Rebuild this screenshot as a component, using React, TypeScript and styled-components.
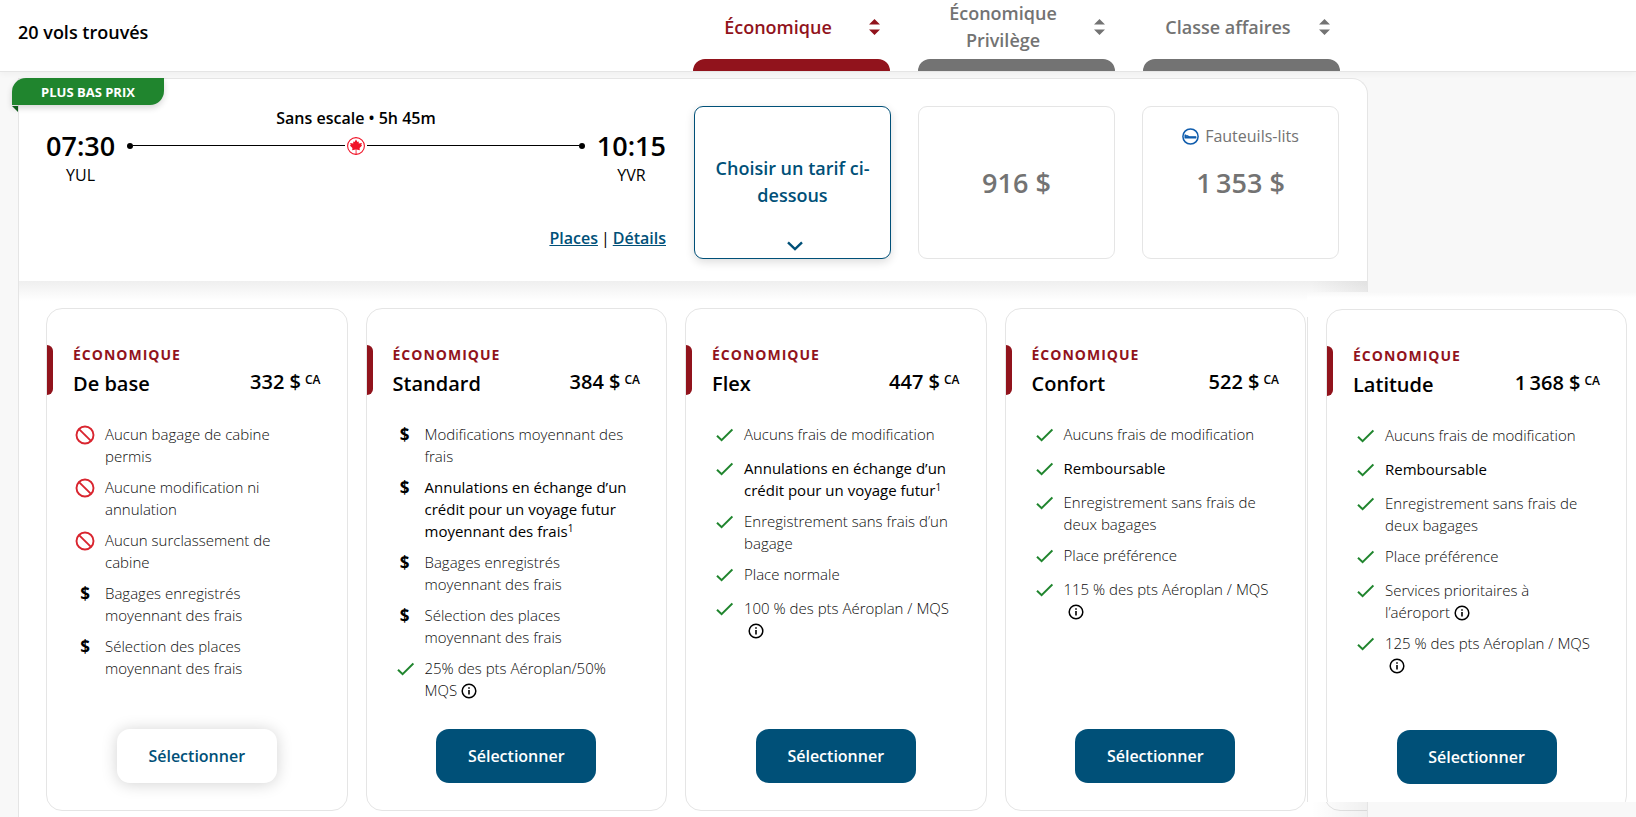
import React from "react";
import styled, { createGlobalStyle, css } from "styled-components";

const color = {
  ink: "#000000",
  body: "#0c0c0c",
  muted: "#737373",
  line: "#e5e5e5",
  page: "#f8f8f8",
  red: "#91131c",
  blue: "#005078",
  green: "#20852e",
};

const GlobalStyle = createGlobalStyle`
  *, *::before, *::after { box-sizing: border-box; }
  body {
    margin: 0;
    background: ${color.page};
    color: ${color.ink};
    font-family: "Open Sans", "Noto Sans", sans-serif;
    font-size: 16px;
    line-height: 24px;
    overflow-x: hidden;
  }
  button { font: inherit; cursor: pointer; }
  h1, h2, h3, p, ul { margin: 0; padding: 0; }
  ul { list-style: none; }
`;

const Page = styled.div`
  display: flex;
  flex-direction: column;
  min-height: 100vh;
  overflow: hidden;
`;

/* ---------- Results header ---------- */

const ResultsHeader = styled.header`
  background: #fff;
  border-bottom: 1px solid ${color.line};
  box-shadow: 0 2px 6px rgba(0, 0, 0, 0.04);
`;

const HeaderInner = styled.div`
  display: flex;
  justify-content: space-between;
  max-width: 1368px;
  height: 71px;
  padding: 0 28px 0 18px;
`;

const ResultCount = styled.h1`
  font-size: 18px;
  font-weight: 600;
  line-height: 27px;
  padding-top: 19px;
`;

const CabinTabs = styled.div`
  display: flex;
  gap: 28px;
`;

const CabinTab = styled.button<{ $active?: boolean }>`
  display: flex;
  flex-direction: column;
  width: 197px;
  padding: 0;
  border: 0;
  background: none;
  color: ${(p) => (p.$active ? color.red : color.muted)};
  font-size: 18px;
  font-weight: 600;
  line-height: 27px;

  &::after {
    content: "";
    align-self: stretch;
    height: 12px;
    border-radius: 12px 12px 0 0;
    background: currentColor;
  }
`;

const CabinTabLabel = styled.span`
  flex: 1;
  align-self: stretch;
  display: flex;
  align-items: center;
  gap: 6px;
  padding: 0 10px 5px 0;

  span {
    flex: 1;
    padding: 0 12px;
  }
`;

/* ---------- Flight panel ---------- */

const Panel = styled.main`
  position: relative;
  flex: 1;
  max-width: 1350px;
  width: calc(100% - 36px);
  margin: 6px 0 0 18px;
  background: #fff;
  border: 1px solid ${color.line};
  border-bottom: 0;
  border-radius: 0 16px 0 0;
`;

const Ribbon = styled.div`
  position: absolute;
  top: -1px;
  left: -7px;
  width: 152px;
  height: 27px;
  border-radius: 14px 0 14px 0;
  background: ${color.green};
  box-shadow: 0 3px 6px rgba(0, 0, 0, 0.16);
  color: #fff;
  font-size: 13px;
  font-weight: 700;
  line-height: 28px;
  text-align: center;

  &::after {
    content: "";
    position: absolute;
    top: 28px;
    left: 0;
    border-top: 6px solid #0f5c1b;
    border-left: 6px solid transparent;
  }
`;

const FlightRow = styled.section`
  display: flex;
  gap: 28px;
  padding: 27px 28px 22px 27px;
`;

const FlightInfo = styled.div`
  flex: 1;
  display: flex;
  flex-direction: column;
  justify-content: space-between;
  padding-bottom: 9px;
`;

const Itinerary = styled.div`
  display: flex;
  gap: 12px;
`;

const Stop = styled.div`
  padding-top: 22px;
  text-align: center;

  time {
    display: block;
    font-size: 27px;
    font-weight: 600;
    line-height: 35px;
  }
`;

const Route = styled.div`
  flex: 1;
  font-weight: 600;
  text-align: center;
`;

const RouteLine = styled.div`
  display: flex;
  align-items: center;
  height: 31px;
`;

const Dot = styled.i`
  width: 6px;
  height: 6px;
  border-radius: 50%;
  background: ${color.ink};
`;

const Rule = styled.i`
  flex: 1;
  height: 1px;
  background: ${color.ink};
`;

const FlightLinks = styled.nav`
  display: flex;
  justify-content: flex-end;
  gap: 3px;
  font-weight: 600;

  a {
    color: ${color.blue};
  }

  span {
    font-weight: 400;
  }
`;

const CabinPrices = styled.div`
  display: flex;
  gap: 27px;
`;

const CabinBox = styled.button<{ $open?: boolean }>`
  display: grid;
  grid-template-rows: 41px 1fr 41px;
  justify-items: center;
  align-items: center;
  width: 197px;
  height: 153px;
  padding: 0 16px;
  border: 1px solid ${color.line};
  border-radius: 9px;
  background: #fff;
  color: ${color.muted};
  font-size: 27px;
  font-weight: 600;
  line-height: 36px;

  ${(p) =>
    p.$open &&
    css`
      grid-template-rows: 41px 1fr 43px;
      border-color: ${color.blue};
      box-shadow: 0 3px 10px rgba(0, 0, 0, 0.14);
      color: ${color.blue};
      font-size: 18px;
      line-height: 27px;
    `}
`;

const CabinNote = styled.span`
  grid-row: 1;
  align-self: end;
  display: flex;
  align-items: center;
  gap: 6px;
  font-size: 16px;
  font-weight: 400;
  line-height: 24px;
`;

const CabinValue = styled.span`
  grid-row: 2;
`;

const CabinToggle = styled.span`
  grid-row: 3;
  align-self: end;
  display: flex;
  align-items: center;
  height: 24px;
  padding-left: 4px;
`;

/* ---------- Fares ---------- */

const Fares = styled.section`
  position: relative;
  background: linear-gradient(#efefef, #fff 20px);
`;

const FareTrack = styled.div`
  display: flex;
  gap: 18px;
  padding: 27px 0 6px 27px;
  overflow: hidden;

  &::after {
    content: "";
    position: absolute;
    top: 0;
    right: 0;
    bottom: 0;
    width: 56px;
    background: linear-gradient(to right, rgba(0, 0, 0, 0), rgba(0, 0, 0, 0.06));
  }
`;

const FareCard = styled.article`
  flex: 0 0 calc((100% - 115px) / 4);
  display: flex;
  flex-direction: column;
  min-height: 503px;
  padding: 36px 26px 27px;
  border: 1px solid ${color.line};
  border-radius: 16px;
  background: #fff;
`;

const FareHead = styled.header`
  position: relative;

  &::before {
    content: "";
    position: absolute;
    top: 0;
    left: -26px;
    width: 6px;
    height: 50px;
    border-radius: 0 6px 6px 0;
    background: ${color.red};
  }
`;

const FareCabin = styled.p`
  color: ${color.red};
  font-size: 14px;
  font-weight: 700;
  letter-spacing: 1px;
  line-height: 20px;
`;

const FareTitle = styled.div`
  display: flex;
  justify-content: space-between;
  align-items: flex-start;
  padding-top: 3px;
  font-size: 20px;
  font-weight: 600;
  line-height: 28px;

  h2 {
    font-size: 20px;
    font-weight: 600;
    line-height: 32px;
  }
`;

const FarePrice = styled.p`
  display: flex;
  gap: 4px;

  small {
    font-size: 12px;
    font-weight: 600;
    line-height: 24px;
  }
`;

const Features = styled.ul`
  flex: 1;
  display: flex;
  flex-direction: column;
  gap: 9px;
  padding: 23px 2px 23px 0;
`;

const FeatureItem = styled.li<{ $strong?: boolean }>`
  display: flex;
  gap: 8px;
  min-height: 25px;
  color: ${(p) => (p.$strong ? color.ink : color.body)};
  font-size: 15px;
  font-weight: ${(p) => (p.$strong ? 400 : 300)};
  line-height: 22px;

  sup {
    font-size: 10px;
    line-height: 0;
    vertical-align: 5px;
  }
`;

const FeatureIcon = styled.span`
  flex: 0 0 24px;
  display: flex;
  justify-content: center;
  align-items: center;
  height: 24px;
  color: ${color.ink};
  font-size: 17px;
  font-weight: 700;
`;

const InfoButton = styled.button`
  display: inline-block;
  width: 16px;
  height: 16px;
  margin-left: 4px;
  padding: 0;
  border: 0;
  background: none;
  vertical-align: -3px;

  svg { display: block; }
`;

const SelectButton = styled.button<{ $light?: boolean }>`
  align-self: center;
  width: 160px;
  height: 54px;
  border: 0;
  border-radius: 13px;
  background: ${(p) => (p.$light ? "#fff" : color.blue)};
  box-shadow: ${(p) => (p.$light ? "0 1px 16px rgba(0, 0, 0, 0.18)" : "none")};
  color: ${(p) => (p.$light ? color.blue : "#fff")};
  font-weight: 600;
`;

/* The last fare slides over the edge of the panel. */
const FareSlide = styled.div`
  position: absolute;
  top: 11px;
  left: calc(100% - 60px);
  width: 330px;
  height: 510px;
  padding: 17px 10px 0 19px;
  overflow: hidden;
  background: linear-gradient(#f8f8f8, #fff 6px);

  &::before {
    content: "";
    position: absolute;
    top: 25px;
    bottom: 0;
    left: 0;
    border-left: 1px solid ${color.line};
  }
`;

/* ---------- Icons ---------- */

const SortIcon = () => (
  <svg width="11" height="16" viewBox="0 0 11 16" fill="currentColor" aria-hidden="true">
    <path d="M5.5 0 11 5.5H0zM5.5 16 0 10.5h11z" />
  </svg>
);

const CheckIcon = () => (
  <svg width="18" height="14" viewBox="0 0 18 14" fill="none" stroke="#20852e" strokeWidth="2" aria-hidden="true">
    <path d="M2 7.7 6.6 12.2 17.4 1.4" />
  </svg>
);

const BanIcon = () => (
  <svg width="20" height="20" viewBox="0 0 20 20" fill="none" stroke="#d9252f" strokeWidth="1.9" aria-hidden="true">
    <circle cx="10" cy="10" r="8.5" />
    <path d="M3.8 3.8 16.2 16.2" />
  </svg>
);

const InfoIcon = () => (
  <svg width="16" height="16" viewBox="0 0 16 16" fill="none" stroke="#000" aria-hidden="true">
    <circle cx="8" cy="8" r="6.8" strokeWidth="1.5" />
    <path d="M8 7v4.5M8 4.3v1.5" strokeWidth="1.6" />
  </svg>
);

const ChevronIcon = () => (
  <svg width="16" height="10" viewBox="0 0 16 10" fill="none" stroke="currentColor" strokeWidth="2.4" aria-hidden="true">
    <path d="M1 1.3 8 8l7-6.7" />
  </svg>
);

const BedIcon = () => (
  <svg width="17" height="17" viewBox="0 0 17 17" fill="none" stroke="#0f5cac" aria-hidden="true">
    <circle cx="8.5" cy="8.5" r="7.6" strokeWidth="1.5" />
    <path d="M3.3 6.5v3.2h11" strokeWidth="1.7" />
    <path d="M3.4 8.3 5 7.9l2.3 1h6.900" strokeWidth="1.5" />
  </svg>
);

const Logo = styled.svg`
  margin: 0 2px;
`;

const LeafLogo = () => (
  <Logo width="18" height="18" viewBox="0 0 18 18" aria-hidden="true">
    <circle cx="9" cy="9" r="8.4" fill="none" stroke="#f01428" strokeWidth="1.1" />
    <path
      fill="#f01428"
      d="M9 2.4 10.5 5l1.3-.6-.1 2.200 3.200-.500-.700 1.800.900.700-2.500 2.400.200 2.300-3.400-.700.200 4.800h-1l.100-4.800-3.500.700.200-2.300-2.500-2.400.900-.700-.700-1.800 3.200.500-.100-2.200 1.300.600z"
    />
  </Logo>
);

/* ---------- Data ---------- */

type Kind = "no" | "fee" | "yes";
type Feature = { kind: Kind; text: string; strong?: boolean; note?: string; info?: boolean };
type Fare = { name: string; price: string; features: Feature[]; light?: boolean };

const fares: Fare[] = [
  {
    name: "De base",
    price: "332 $",
    light: true,
    features: [
      { kind: "no", text: "Aucun bagage de cabine permis" },
      { kind: "no", text: "Aucune modification ni annulation" },
      { kind: "no", text: "Aucun surclassement de cabine" },
      { kind: "fee", text: "Bagages enregistrés moyennant des frais" },
      { kind: "fee", text: "Sélection des places moyennant des frais" },
    ],
  },
  {
    name: "Standard",
    price: "384 $",
    features: [
      { kind: "fee", text: "Modifications moyennant des frais" },
      {
        kind: "fee",
        text: "Annulations en échange d’un crédit pour un voyage futur moyennant des frais",
        strong: true,
        note: "1",
      },
      { kind: "fee", text: "Bagages enregistrés moyennant des frais" },
      { kind: "fee", text: "Sélection des places moyennant des frais" },
      { kind: "yes", text: "25% des pts Aéroplan/50% MQS", info: true },
    ],
  },
  {
    name: "Flex",
    price: "447 $",
    features: [
      { kind: "yes", text: "Aucuns frais de modification" },
      { kind: "yes", text: "Annulations en échange d’un crédit pour un voyage futur", strong: true, note: "1" },
      { kind: "yes", text: "Enregistrement sans frais d’un bagage" },
      { kind: "yes", text: "Place normale" },
      { kind: "yes", text: "100 % des pts Aéroplan / MQS", info: true },
    ],
  },
  {
    name: "Confort",
    price: "522 $",
    features: [
      { kind: "yes", text: "Aucuns frais de modification" },
      { kind: "yes", text: "Remboursable", strong: true },
      { kind: "yes", text: "Enregistrement sans frais de deux bagages" },
      { kind: "yes", text: "Place préférence" },
      { kind: "yes", text: "115 % des pts Aéroplan / MQS", info: true },
    ],
  },
];

const latitude: Fare = {
  name: "Latitude",
  price: "1\u2009368 $",
  features: [
    { kind: "yes", text: "Aucuns frais de modification" },
    { kind: "yes", text: "Remboursable", strong: true },
    { kind: "yes", text: "Enregistrement sans frais de deux bagages" },
    { kind: "yes", text: "Place préférence" },
    { kind: "yes", text: "Services prioritaires à l’aéroport", info: true },
    { kind: "yes", text: "125 % des pts Aéroplan / MQS", info: true },
  ],
};

const cabins = ["Économique", "Économique Privilège", "Classe affaires"];

const kindIcon: Record<Kind, React.ReactNode> = {
  no: <BanIcon />,
  fee: "$",
  yes: <CheckIcon />,
};

const FareOption = ({ fare }: { fare: Fare }) => (
  <FareCard>
    <FareHead>
      <FareCabin>ÉCONOMIQUE</FareCabin>
      <FareTitle>
        <h2>{fare.name}</h2>
        <FarePrice>
          {fare.price}
          <small>CA</small>
        </FarePrice>
      </FareTitle>
    </FareHead>
    <Features>
      {fare.features.map((f) => (
        <FeatureItem key={f.text} $strong={f.strong}>
          <FeatureIcon>{kindIcon[f.kind]}</FeatureIcon>
          <span>
            {f.text}
            {f.note && <sup>{f.note}</sup>}
            {f.info && (
              <InfoButton type="button" aria-label="Renseignements">
                <InfoIcon />
              </InfoButton>
            )}
          </span>
        </FeatureItem>
      ))}
    </Features>
    <SelectButton type="button" $light={fare.light}>
      Sélectionner
    </SelectButton>
  </FareCard>
);

export default function App() {
  return (
    <>
      <GlobalStyle />
      <Page>
        <ResultsHeader>
          <HeaderInner>
            <ResultCount>20 vols trouvés</ResultCount>
            <CabinTabs>
              {cabins.map((name, i) => (
                <CabinTab key={name} type="button" $active={i === 0}>
                  <CabinTabLabel>
                    <span>{name}</span>
                    <SortIcon />
                  </CabinTabLabel>
                </CabinTab>
              ))}
            </CabinTabs>
          </HeaderInner>
        </ResultsHeader>

        <Panel>
          <FlightRow>
            <FlightInfo>
              <Itinerary>
                <Stop>
                  <time>07:30</time>
                  <p>YUL</p>
                </Stop>
                <Route>
                  <p>Sans escale • 5h 45m</p>
                  <RouteLine>
                    <Dot />
                    <Rule />
                    <LeafLogo />
                    <Rule />
                    <Dot />
                  </RouteLine>
                </Route>
                <Stop>
                  <time>10:15</time>
                  <p>YVR</p>
                </Stop>
              </Itinerary>
              <FlightLinks>
                <a href="#places">Places</a>
                <span>|</span>
                <a href="#details">Détails</a>
              </FlightLinks>
            </FlightInfo>
            <CabinPrices>
              <CabinBox type="button" $open aria-expanded="true">
                <CabinValue>Choisir un tarif ci-dessous</CabinValue>
                <CabinToggle>
                  <ChevronIcon />
                </CabinToggle>
              </CabinBox>
              <CabinBox type="button">
                <CabinValue>916 $</CabinValue>
              </CabinBox>
              <CabinBox type="button">
                <CabinNote>
                  <BedIcon />
                  Fauteuils-lits
                </CabinNote>
                <CabinValue>{"1\u2009353 $"}</CabinValue>
              </CabinBox>
            </CabinPrices>
          </FlightRow>

          <Ribbon>PLUS BAS PRIX</Ribbon>

          <Fares>
            <FareTrack>
              {fares.map((fare) => (
                <FareOption key={fare.name} fare={fare} />
              ))}
              <FareCard aria-hidden="true" />
            </FareTrack>
            <FareSlide>
              <FareOption fare={latitude} />
            </FareSlide>
          </Fares>
        </Panel>
      </Page>
    </>
  );
}
